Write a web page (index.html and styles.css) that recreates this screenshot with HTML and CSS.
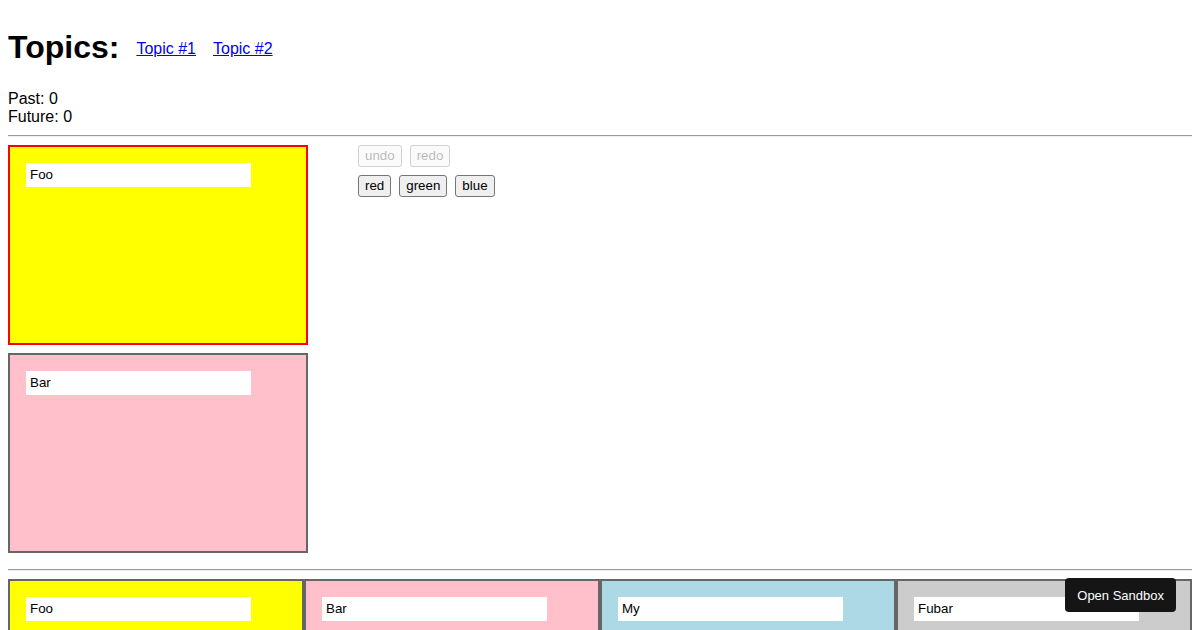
FILE: index.html
```html
<!DOCTYPE html>
<html lang="en">
<head>
<meta charset="utf-8">
<title>Topics</title>
<link rel="stylesheet" href="styles.css">
</head>
<body>
<nav class="topbar">
  <h1 class="title">Topics:</h1>
  <a class="topic-link" href="#topic-1">Topic #1</a>
  <a class="topic-link" href="#topic-2">Topic #2</a>
</nav>
<div class="history">
  <div>Past: 0</div>
  <div>Future: 0</div>
</div>
<hr class="divider">
<div class="workspace">
  <div class="card-column">
    <div class="card card-yellow card-selected"><input class="card-input" type="text" value="Foo"></div>
    <div class="card card-pink"><input class="card-input" type="text" value="Bar"></div>
  </div>
  <div class="controls">
    <div class="btn-row">
      <button class="btn" disabled>undo</button>
      <button class="btn" disabled>redo</button>
    </div>
    <div class="btn-row">
      <button class="btn">red</button>
      <button class="btn">green</button>
      <button class="btn">blue</button>
    </div>
  </div>
</div>
<hr class="divider">
<div class="card-row">
  <div class="card card-yellow"><input class="card-input" type="text" value="Foo"></div>
  <div class="card card-pink"><input class="card-input" type="text" value="Bar"></div>
  <div class="card card-blue"><input class="card-input" type="text" value="My"></div>
  <div class="card card-gray"><input class="card-input" type="text" value="Fubar"></div>
</div>
<button class="sandbox-btn">Open Sandbox</button>
</body>
</html>
```
FILE: styles.css
```css
html, body {
  font-family: "Liberation Sans", Arial, sans-serif;
  font-size: 16px;
  color: #000;
  background: #fff;
}

body {
  margin: 8px;
}

.topbar {
  display: flex;
  align-items: center;
}

.title {
  font-size: 32px;
  line-height: 37px;
  font-weight: bold;
  margin: 21.44px 0 23.56px 0;
}

.topic-link {
  color: #0000ee;
  text-decoration: underline;
  margin-left: 17px;
}

.history {
  line-height: 18.5px;
}

.divider {
  margin: 8px 0;
  border: 0;
  border-top: 1px solid #9a9a9a;
  border-bottom: 1px solid #eeeeee;
  height: 0;
}

.workspace {
  display: flex;
  align-items: flex-start;
}

.card-column {
  display: flex;
  flex-direction: column;
}

.card {
  box-sizing: border-box;
  width: 300px;
  height: 200px;
  border: 2px solid #666666;
  padding: 16px;
  margin-bottom: 8px;
}

.card-selected {
  border-color: #ff0000;
}

.card-yellow { background: #ffff00; }
.card-pink { background: #ffc0cb; }
.card-blue { background: #add8e6; }
.card-gray { background: #cccccc; }

.card-input {
  display: block;
  box-sizing: border-box;
  width: 225px;
  height: 24px;
  border: none;
  padding: 0 4px;
  margin: 0;
  background: #fff;
  color: #000;
  font-family: "Liberation Sans", Arial, sans-serif;
  font-size: 13.33px;
  outline: none;
}

.controls {
  margin-left: 50px;
}

.btn-row {
  display: flex;
  gap: 8px;
  margin-bottom: 8px;
}

.btn {
  font-family: "Liberation Sans", Arial, sans-serif;
  font-size: 13.33px;
  line-height: 16px;
  padding: 2px 6px;
  margin: 0;
  background: #efefef;
  color: #000;
  border: 1px solid #767676;
  border-radius: 3px;
}

.btn:disabled {
  color: rgba(16, 16, 16, 0.3);
  background: rgba(239, 239, 239, 0.3);
  border-color: rgba(118, 118, 118, 0.3);
}

.card-row {
  display: flex;
}

.card-row .card {
  flex: 1 1 0;
  width: auto;
  margin-bottom: 0;
}

.sandbox-btn {
  position: fixed;
  right: 24px;
  bottom: 18px;
  height: 34px;
  padding: 0 12px;
  border: none;
  border-radius: 4px;
  background: #151515;
  color: #fff;
  font-family: "Liberation Sans", Arial, sans-serif;
  font-size: 13px;
}
```
